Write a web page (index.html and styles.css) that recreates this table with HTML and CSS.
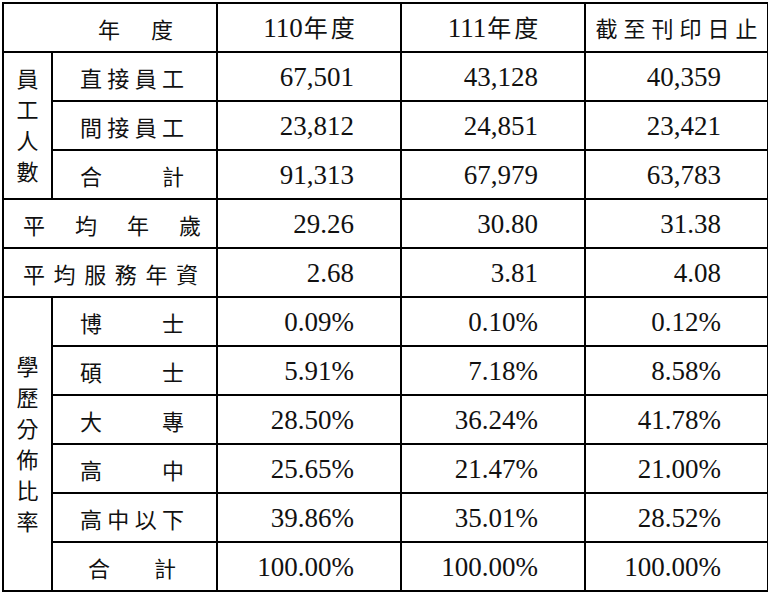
FILE: index.html
```html
<!DOCTYPE html>
<html lang="zh-Hant">
<head>
<meta charset="utf-8">
<title>員工資料</title>
<link rel="stylesheet" href="styles.css">
</head>
<body>
<table class="tbl">
  <colgroup>
    <col class="c1"><col class="c2"><col class="c3"><col class="c4"><col class="c5">
  </colgroup>
  <tr>
    <td colspan="2" class="lab"><div class="sp w-head"><span>年</span><span>度</span></div></td>
    <td class="hd">110<span class="cj yr">年度</span></td>
    <td class="hd">111<span class="cj yr">年度</span></td>
    <td class="hd"><span class="cj wide">截至刊印日止</span></td>
  </tr>
  <tr>
    <td rowspan="3" class="grp"><div class="vt">員工人數</div></td>
    <td class="lab"><div class="sp w-std"><span>直</span><span>接</span><span>員</span><span>工</span></div></td>
    <td class="num">67,501</td><td class="num">43,128</td><td class="num">40,359</td>
  </tr>
  <tr>
    <td class="lab"><div class="sp w-std"><span>間</span><span>接</span><span>員</span><span>工</span></div></td>
    <td class="num">23,812</td><td class="num">24,851</td><td class="num">23,421</td>
  </tr>
  <tr>
    <td class="lab"><div class="sp w-std"><span>合</span><span>計</span></div></td>
    <td class="num">91,313</td><td class="num">67,979</td><td class="num">63,783</td>
  </tr>
  <tr>
    <td colspan="2" class="lab"><div class="sp w-age"><span>平</span><span>均</span><span>年</span><span>歲</span></div></td>
    <td class="num">29.26</td><td class="num">30.80</td><td class="num">31.38</td>
  </tr>
  <tr>
    <td colspan="2" class="lab"><div class="sp w-svc"><span>平</span><span>均</span><span>服</span><span>務</span><span>年</span><span>資</span></div></td>
    <td class="num">2.68</td><td class="num">3.81</td><td class="num">4.08</td>
  </tr>
  <tr>
    <td rowspan="6" class="grp"><div class="vt">學歷分佈比率</div></td>
    <td class="lab"><div class="sp w-std"><span>博</span><span>士</span></div></td>
    <td class="num">0.09%</td><td class="num">0.10%</td><td class="num">0.12%</td>
  </tr>
  <tr>
    <td class="lab"><div class="sp w-std"><span>碩</span><span>士</span></div></td>
    <td class="num">5.91%</td><td class="num">7.18%</td><td class="num">8.58%</td>
  </tr>
  <tr>
    <td class="lab"><div class="sp w-std"><span>大</span><span>專</span></div></td>
    <td class="num">28.50%</td><td class="num">36.24%</td><td class="num">41.78%</td>
  </tr>
  <tr>
    <td class="lab"><div class="sp w-std"><span>高</span><span>中</span></div></td>
    <td class="num">25.65%</td><td class="num">21.47%</td><td class="num">21.00%</td>
  </tr>
  <tr>
    <td class="lab"><div class="sp w-std"><span>高</span><span>中</span><span>以</span><span>下</span></div></td>
    <td class="num">39.86%</td><td class="num">35.01%</td><td class="num">28.52%</td>
  </tr>
  <tr>
    <td class="lab"><div class="sp w-tot"><span>合</span><span>計</span></div></td>
    <td class="num">100.00%</td><td class="num">100.00%</td><td class="num">100.00%</td>
  </tr>
</table>
</body>
</html>
```
FILE: styles.css
```css
html, body {
  margin: 0;
  padding: 0;
  background: #fff;
}
body {
  padding: 2px 0 0 2px;
  font-family: "Liberation Serif", "Noto Sans CJK TC", serif;
  color: #111;
}
.tbl {
  border-collapse: collapse;
  table-layout: fixed;
  width: 765px;
  height: 588px;
  border: 2.5px solid #000;
}
.c1 { width: 49px; }
.c2 { width: 165px; }
.c3 { width: 184px; }
.c4 { width: 184px; }
.c5 { width: 183px; }
.tbl tr {
  height: 49px;
}
.tbl td {
  border: 2px solid #000;
  padding: 0;
  vertical-align: middle;
  line-height: 30px;
}
.num {
  text-align: right;
  padding-right: 46px !important;
  font-size: 27px;
  font-family: "Liberation Serif", "Times New Roman", serif;
}
.hd {
  text-align: center;
  font-size: 27px;
  font-family: "Liberation Serif", "Times New Roman", serif;
}
.cj {
  font-family: "Noto Sans CJK TC", sans-serif;
  font-size: 22px;
}
.yr {
  font-size: 24px;
  letter-spacing: 3px;
  margin-left: 1px;
  margin-right: -3px;
}
.wide {
  letter-spacing: 6px;
  margin-right: -6px;
}
.lab {
  font-family: "Noto Sans CJK TC", sans-serif;
  font-size: 22px;
}
.sp {
  display: flex;
  justify-content: space-between;
}
.w-head { width: 75px; margin-left: 94px; }
.w-std { width: 104px; margin-left: 27px; }
.w-tot { width: 88px; margin-left: 35px; }
.w-age { width: 178px; margin-left: 19px; }
.w-svc { width: 175px; margin-left: 19px; }
.grp {
  text-align: center;
}
.vt {
  font-family: "Noto Sans CJK TC", sans-serif;
  font-size: 22px;
  line-height: 22px;
  writing-mode: vertical-rl;
  letter-spacing: 9px;
  margin: 0 auto;
  padding-top: 9px;
}
```
